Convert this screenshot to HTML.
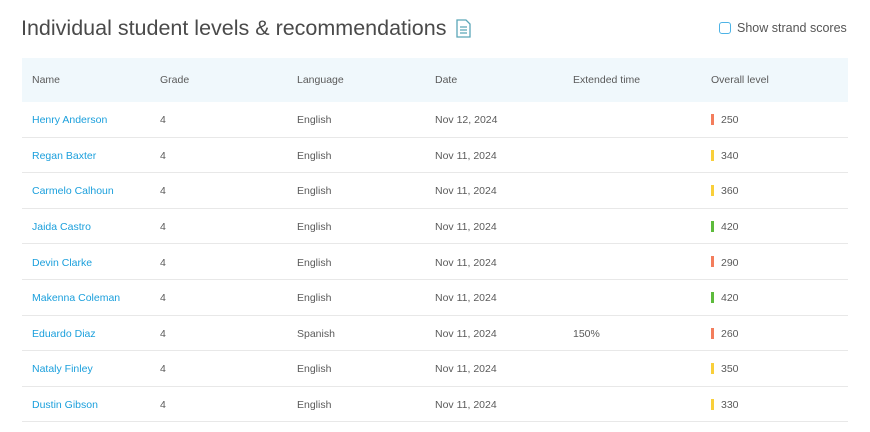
<!DOCTYPE html>
<html><head><style>
body{margin:0;width:870px;height:432px;background:#fff;font-family:"Liberation Sans",sans-serif;position:relative;overflow:hidden}
.title{position:absolute;left:21px;top:16px;font-size:21.5px;color:#4a4a4a;white-space:nowrap}
.icon{position:absolute;left:456px;top:19px}
.cb{position:absolute;left:719px;top:22px;width:10px;height:10px;border:1.5px solid #4db3e6;border-radius:3px}
.cbl{position:absolute;left:737px;top:21px;font-size:12.5px;color:#555}
table{position:absolute;left:22px;top:58px;width:826px;border-collapse:collapse;font-size:10.5px;color:#5a5a5a}
thead tr{background:#f0f8fc;height:44px}
td{padding:2px 0 0 10px;height:32.6px;border-bottom:1px solid #e8e8e8}
th{font-weight:normal;text-align:left;padding-left:10px}
td:first-child{color:#1a9fdc}
.bar{display:inline-block;width:3px;height:11px;vertical-align:middle;margin-right:7px;position:relative;top:-1px}
.r{background:#f37d5c}.y{background:#f9cf3a}.g{background:#5dbb3c}
</style></head><body>
<div class="title">Individual student levels &amp; recommendations</div>
<svg class="icon" width="15" height="19" viewBox="0 0 15 19"><path d="M1 1h9l4 4v13H1z" fill="none" stroke="#5aa6b8" stroke-width="1.3"/><path d="M4 8h7M4 11h7M4 14h7" stroke="#5aa6b8" stroke-width="1.2"/></svg>
<div class="cb"></div><div class="cbl">Show strand scores</div>
<table>
<colgroup><col style="width:128px"><col style="width:137px"><col style="width:138px"><col style="width:138px"><col style="width:138px"><col></colgroup>
<thead><tr><th>Name</th><th>Grade</th><th>Language</th><th>Date</th><th>Extended time</th><th>Overall level</th></tr></thead>
<tbody>
<tr><td>Henry Anderson</td><td>4</td><td>English</td><td>Nov 12, 2024</td><td></td><td><span class="bar r"></span>250</td></tr>
<tr><td>Regan Baxter</td><td>4</td><td>English</td><td>Nov 11, 2024</td><td></td><td><span class="bar y"></span>340</td></tr>
<tr><td>Carmelo Calhoun</td><td>4</td><td>English</td><td>Nov 11, 2024</td><td></td><td><span class="bar y"></span>360</td></tr>
<tr><td>Jaida Castro</td><td>4</td><td>English</td><td>Nov 11, 2024</td><td></td><td><span class="bar g"></span>420</td></tr>
<tr><td>Devin Clarke</td><td>4</td><td>English</td><td>Nov 11, 2024</td><td></td><td><span class="bar r"></span>290</td></tr>
<tr><td>Makenna Coleman</td><td>4</td><td>English</td><td>Nov 11, 2024</td><td></td><td><span class="bar g"></span>420</td></tr>
<tr><td>Eduardo Diaz</td><td>4</td><td>Spanish</td><td>Nov 11, 2024</td><td>150%</td><td><span class="bar r"></span>260</td></tr>
<tr><td>Nataly Finley</td><td>4</td><td>English</td><td>Nov 11, 2024</td><td></td><td><span class="bar y"></span>350</td></tr>
<tr><td>Dustin Gibson</td><td>4</td><td>English</td><td>Nov 11, 2024</td><td></td><td><span class="bar y"></span>330</td></tr>
</tbody></table>
</body></html>
